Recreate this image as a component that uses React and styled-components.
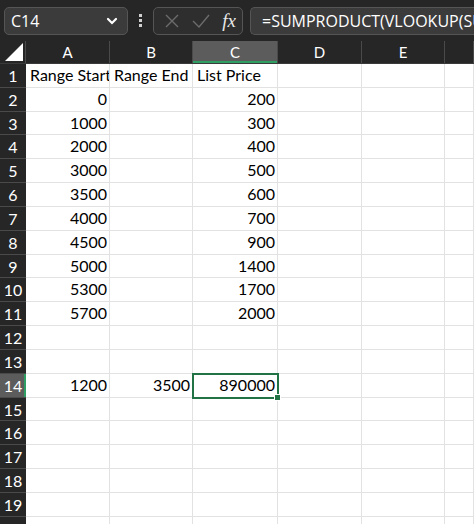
import React from 'react'
import styled, { createGlobalStyle } from 'styled-components'

const GlobalStyle = createGlobalStyle`
  html, body { margin: 0; padding: 0; background: #ffffff; }
  body { font-family: Lato, "Open Sans", sans-serif; }
`

const COLS = ['A', 'B', 'C', 'D', 'E', '']
const GRID = '26px 84px 83px 85px 84px 83px 1fr'

const data = {
  1: ['Range Start', 'Range End', 'List Price'],
  2: [0, '', 200],
  3: [1000, '', 300],
  4: [2000, '', 400],
  5: [3000, '', 500],
  6: [3500, '', 600],
  7: [4000, '', 700],
  8: [4500, '', 900],
  9: [5000, '', 1400],
  10: [5300, '', 1700],
  11: [5700, '', 2000],
  14: [1200, 3500, 890000],
}

function App() {
  const rows = []
  for (let r = 1; r <= 20; r++) rows.push(r)

  return (
    <Page>
      <GlobalStyle />
      <Toolbar>
        <NameBox>
          <span>C14</span>
          <svg width="12" height="8" viewBox="0 0 12 8">
            <path d="M2 2 L6 6 L10 2" stroke="#fff" strokeWidth="2.2" fill="none" strokeLinecap="round" />
          </svg>
        </NameBox>
        <Dots>
          <i /><i /><i />
        </Dots>
        <FxBox>
          <svg width="16" height="16" viewBox="0 0 16 16">
            <path d="M2 2 L14 14 M14 2 L2 14" stroke="#6c6c6c" strokeWidth="1.4" fill="none" />
          </svg>
          <svg width="20" height="16" viewBox="0 0 20 16">
            <path d="M2 8 L8 14 L18 2" stroke="#6c6c6c" strokeWidth="1.4" fill="none" />
          </svg>
          <Fx>fx</Fx>
        </FxBox>
        <FormulaBox>=SUMPRODUCT(VLOOKUP(SUMPRODUCT</FormulaBox>
      </Toolbar>

      <HeaderRow>
        <Corner>
          <svg width="18" height="18" viewBox="0 0 18 18">
            <path d="M18 0 L18 18 L0 18 Z" fill="#ffffff" />
          </svg>
        </Corner>
        {COLS.map((c, i) => (
          <ColHead key={i} $active={c === 'C'}>{c}</ColHead>
        ))}
      </HeaderRow>

      {rows.map(r => {
        const vals = data[r] || []
        return (
          <Row key={r}>
            <RowHead $active={r === 14}>{r}</RowHead>
            {COLS.map((c, i) => {
              const v = vals[i]
              const isNum = typeof v === 'number'
              return (
                <Cell key={i} $num={isNum} $selected={r === 14 && c === 'C'}>
                  {v === undefined ? '' : String(v)}
                  {r === 14 && c === 'C' && <Handle />}
                </Cell>
              )
            })}
          </Row>
        )
      })}
    </Page>
  )
}

export default App

const Page = styled.div`
  width: 474px;
  height: 524px;
  overflow: hidden;
  background: #ffffff;
`

const Toolbar = styled.div`
  height: 41px;
  background: #262626;
  display: flex;
  align-items: center;
  padding: 0 0 0 4px;
  box-sizing: border-box;
  overflow: hidden;
  white-space: nowrap;
`

const NameBox = styled.div`
  width: 124px;
  height: 28px;
  box-sizing: border-box;
  background: #3b3b3b;
  border: 1px solid #555555;
  border-radius: 5px;
  display: flex;
  align-items: center;
  justify-content: space-between;
  padding: 0 9px 0 6px;
  color: #ffffff;
  font-family: "Open Sans", sans-serif;
  font-size: 16px;
  flex-shrink: 0;
`

const Dots = styled.div`
  width: 25px;
  display: flex;
  flex-direction: column;
  align-items: center;
  gap: 2px;
  flex-shrink: 0;
  i {
    width: 3px;
    height: 3px;
    background: #cfcfcf;
    display: block;
  }
`

const FxBox = styled.div`
  width: 90px;
  height: 28px;
  box-sizing: border-box;
  border: 1px solid #555555;
  background: #2e2e2e;
  border-radius: 5px;
  display: flex;
  align-items: center;
  justify-content: space-between;
  padding: 0 6px 0 10px;
  flex-shrink: 0;
`

const Fx = styled.span`
  color: #e8e8e8;
  font-family: "Liberation Serif", serif;
  font-style: italic;
  font-size: 19px;
  line-height: 1;
`

const FormulaBox = styled.div`
  margin-left: 7px;
  height: 28px;
  flex: 1;
  min-width: 0;
  box-sizing: border-box;
  background: #3b3b3b;
  border: 1px solid #555555;
  border-right: none;
  border-radius: 5px 0 0 5px;
  color: #ffffff;
  font-family: "Open Sans", sans-serif;
  font-size: 16px;
  line-height: 26px;
  padding-left: 11px;
  overflow: hidden;
`

const HeaderRow = styled.div`
  display: grid;
  grid-template-columns: ${GRID};
  height: 23px;
  background: #262626;
  border-bottom: 1px solid #3a3a3a;
  box-sizing: border-box;
`

const Corner = styled.div`
  display: flex;
  align-items: flex-end;
  justify-content: flex-end;
  padding: 0 2px 2px 0;
  border-right: 1px solid #4a4a4a;
`

const ColHead = styled.div`
  display: flex;
  align-items: center;
  justify-content: center;
  color: #ffffff;
  font-size: 15px;
  border-right: 1px solid #4a4a4a;
  background: ${p => (p.$active ? '#5c5c5c' : 'transparent')};
  box-shadow: ${p => (p.$active ? 'inset 0 -2px 0 #2e9e62' : 'none')};
`

const Row = styled.div`
  display: grid;
  grid-template-columns: ${GRID};
  height: 23.84px;
`

const RowHead = styled.div`
  background: ${p => (p.$active ? '#5c5c5c' : '#262626')};
  color: #ffffff;
  font-size: 16px;
  display: flex;
  align-items: center;
  justify-content: center;
  border-bottom: 1px solid #4a4a4a;
  box-sizing: border-box;
  box-shadow: ${p => (p.$active ? 'inset -2px 0 0 #2e9e62' : 'none')};
`

const Cell = styled.div`
  position: relative;
  box-sizing: border-box;
  border-right: 1px solid #e2e2e2;
  border-bottom: 1px solid #e2e2e2;
  color: #000000;
  font-size: 16px;
  line-height: 22px;
  white-space: nowrap;
  overflow: ${p => (p.$selected ? 'visible' : 'hidden')};
  text-align: ${p => (p.$num ? 'right' : 'left')};
  padding: 0 2px 0 4px;
  outline: ${p => (p.$selected ? '2px solid #217346' : 'none')};
  outline-offset: -1px;
  z-index: ${p => (p.$selected ? 1 : 0)};
`

const Handle = styled.span`
  position: absolute;
  right: -4px;
  bottom: -4px;
  width: 5px;
  height: 5px;
  background: #217346;
  border: 1px solid #ffffff;
`
